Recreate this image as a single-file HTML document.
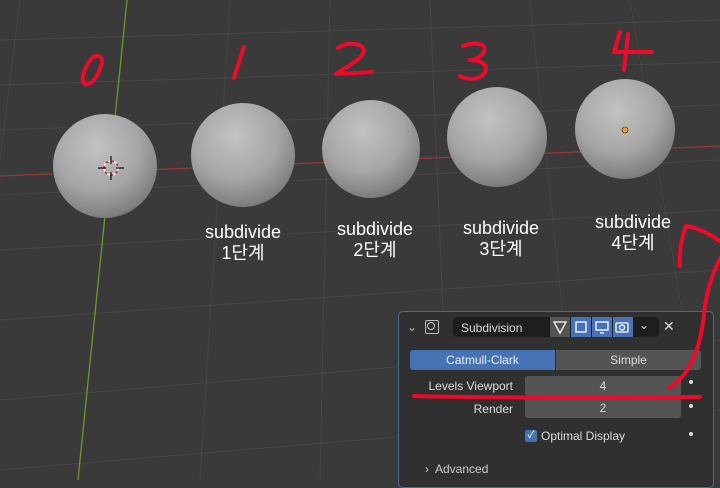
<!DOCTYPE html>
<html><head><meta charset="utf-8"><style>
body{margin:0;width:720px;height:480px;overflow:hidden;background:#3a3a3a;font-family:"Liberation Sans","Noto Sans CJK KR",sans-serif}
.lbl{position:absolute;color:#fff;font-size:18px;text-align:center;line-height:21px;font-family:"Liberation Sans","Noto Sans CJK KR",sans-serif}
.panel{position:absolute;left:398px;top:311px;width:314px;height:175px;background:#303030;border:1px solid #4a6a96;border-radius:5px;font-size:12px;color:#ddd}
</style></head><body>
<svg width="720" height="480" style="position:absolute;left:0;top:0">
<defs>
<radialGradient id="s" cx="0.42" cy="0.32" r="0.75"><stop offset="0" stop-color="#c2c2c2"/><stop offset="0.55" stop-color="#a6a6a6"/><stop offset="0.9" stop-color="#7e7e7e"/><stop offset="1" stop-color="#5a5a5a"/></radialGradient>
</defs>
<g stroke="#454545" stroke-width="1" fill="none">
<path d="M0 40 L720 20 M0 85 L720 62 M0 130 L720 105 M0 195 L720 160 M0 250 L720 210 M0 320 L720 270 M0 400 L720 340 M0 470 L720 410"/>
<path d="M20 0 L-40 480 M230 0 L200 480 M330 0 L320 480 M430 0 L450 480 M530 0 L580 480 M630 0 L710 480"/>
</g>
<path d="M0 176 L720 146" stroke="#9a3636" stroke-width="1.3"/>
<path d="M127 0 L78 480" stroke="#6a9a2a" stroke-width="1.3"/>
<circle cx="105" cy="166" r="52" fill="url(#s)"/>
<circle cx="243" cy="155" r="52" fill="url(#s)"/>
<circle cx="371" cy="149" r="49" fill="url(#s)"/>
<circle cx="497" cy="137" r="50" fill="url(#s)"/>
<circle cx="625" cy="129" r="50" fill="url(#s)"/>
<circle cx="111" cy="168" r="7" fill="none" stroke="#fff" stroke-width="1.5" stroke-dasharray="3 3"/>
<circle cx="111" cy="168" r="7" fill="none" stroke="#d22" stroke-width="1.5" stroke-dasharray="3 3" stroke-dashoffset="3"/>
<path d="M98 168h8M116 168h8M111 156v8M111 172v8" stroke="#111" stroke-width="1.2"/>
<circle cx="625" cy="130" r="3" fill="#f0a020" stroke="#222" stroke-width=".6"/>
<g stroke="#ee0a2a" stroke-width="4" fill="none" stroke-linecap="round" stroke-linejoin="round">
<path d="M92 58 C84 68 80 80 85 84 C93 86 100 72 102 62 C103 56 97 54 92 58"/>
<path d="M244 47 L234 78"/>
<path d="M338 48 C345 42 362 42 364 50 C364 58 348 66 336 74 L372 72"/>
<path d="M463 46 C472 42 488 42 484 52 C480 58 474 60 470 60 C482 60 490 66 484 74 C478 80 466 80 460 76"/>
<path d="M620 32 L614 52 L652 52 M628 34 L624 70"/>
</g>
</svg>
<div class="lbl" style="left:193px;top:222px;width:100px">subdivide<br>1단계</div>
<div class="lbl" style="left:325px;top:219px;width:100px">subdivide<br>2단계</div>
<div class="lbl" style="left:451px;top:218px;width:100px">subdivide<br>3단계</div>
<div class="lbl" style="left:583px;top:212px;width:100px">subdivide<br>4단계</div>
<div class="panel">
<div style="position:absolute;left:8px;top:8px;color:#bbb">⌄</div>
<div style="position:absolute;left:26px;top:8px;width:12px;height:12px;border:1px solid #bbb;border-radius:2px"><div style="width:8px;height:8px;margin:1px;border:1.5px solid #ccc;border-radius:50%;box-sizing:border-box"></div></div>
<div style="position:absolute;left:54px;top:5px;width:206px;height:20px;background:#1e1e1e;border-radius:4px"></div>
<div style="position:absolute;left:62px;top:9px;color:#ddd">Subdivision</div>
<div style="position:absolute;left:151px;top:5px;width:20px;height:20px;background:#545454"></div>
<div style="position:absolute;left:172px;top:5px;width:20px;height:20px;background:#4772b3"></div>
<div style="position:absolute;left:193px;top:5px;width:20px;height:20px;background:#4772b3"></div>
<div style="position:absolute;left:214px;top:5px;width:20px;height:20px;background:#4772b3"></div>
<svg width="84" height="20" style="position:absolute;left:151px;top:5px" fill="none" stroke="#fff" stroke-width="1.3">
<path d="M4 5 L16 5 L10 16 Z"/>
<rect x="26" y="5" width="10" height="10"/>
<rect x="46" y="5" width="12" height="8"/><path d="M50 16h4"/>
<rect x="66" y="6" width="12" height="9" rx="1"/><circle cx="72" cy="10.5" r="2.5"/>
</svg>
<div style="position:absolute;left:240px;top:6px;color:#ddd">⌄</div>
<div style="position:absolute;left:264px;top:6px;color:#ddd;font-size:14px">✕</div>
<div style="position:absolute;left:11px;top:38px;width:145px;height:20px;background:#4772b3;border-radius:3px 0 0 3px;text-align:center;line-height:20px;color:#eee">Catmull-Clark</div>
<div style="position:absolute;left:157px;top:38px;width:145px;height:20px;background:#545454;border-radius:0 3px 3px 0;text-align:center;line-height:20px;color:#ddd">Simple</div>
<div style="position:absolute;left:0;top:67px;width:114px;text-align:right">Levels Viewport</div>
<div style="position:absolute;left:126px;top:64px;width:156px;height:20px;background:#545454;border-radius:3px;text-align:center;line-height:20px">4</div>
<div style="position:absolute;left:0;top:90px;width:114px;text-align:right">Render</div>
<div style="position:absolute;left:126px;top:86px;width:156px;height:20px;background:#545454;border-radius:3px;text-align:center;line-height:20px">2</div>
<div style="position:absolute;left:126px;top:118px;width:12px;height:12px;background:#4772b3;border-radius:2px;color:#fff;font-size:10px;line-height:12px;text-align:center">✓</div>
<div style="position:absolute;left:142px;top:117px">Optimal Display</div>
<div style="position:absolute;left:290px;top:68px;width:4px;height:4px;background:#ddd;border-radius:50%"></div>
<div style="position:absolute;left:290px;top:92px;width:4px;height:4px;background:#ddd;border-radius:50%"></div>
<div style="position:absolute;left:290px;top:120px;width:4px;height:4px;background:#ddd;border-radius:50%"></div>
<div style="position:absolute;left:26px;top:150px;color:#ccc">›&nbsp; Advanced</div>
</div>
<svg width="720" height="480" style="position:absolute;left:0;top:0;z-index:5">
<g stroke="#ee0a2a" stroke-width="4" fill="none" stroke-linecap="round" stroke-linejoin="round">
<path d="M680 266 C679 250 682 237 686 226"/>
<path d="M686 226 C700 228 714 236 726 246"/>
<path d="M724 252 C712 272 706 292 704 315 C700 350 690 375 669 388"/>
<path d="M414 396 C500 398 620 398 700 397"/>
</g>
</svg>
</body></html>
